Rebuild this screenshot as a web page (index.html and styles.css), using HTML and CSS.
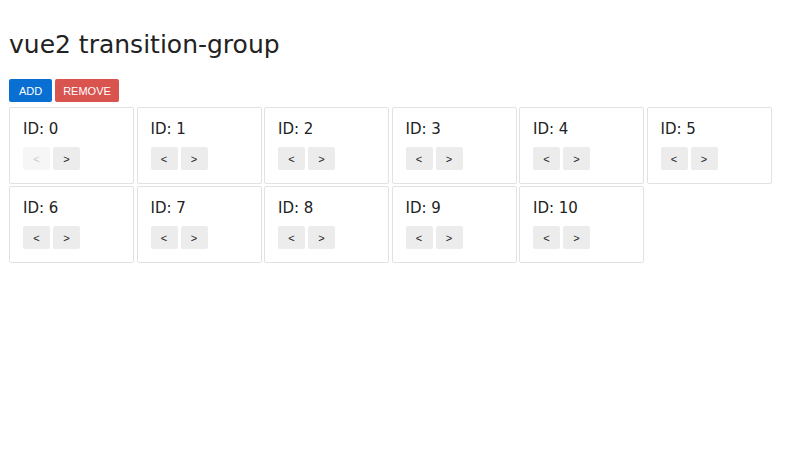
FILE: index.html
```html
<!DOCTYPE html>
<html>
<head>
<meta charset="utf-8">
<link rel="stylesheet" href="styles.css">
</head>
<body>
<h1 class="title">vue2 transition-group</h1>
<div class="toolbar">
  <button class="btn btn-add">ADD</button>
  <button class="btn btn-remove">REMOVE</button>
</div>
<div class="list">
  <div class="card"><div class="card-id">ID: 0</div><div class="moves"><button class="mv" disabled>&lt;</button><button class="mv">&gt;</button></div></div>
  <div class="card"><div class="card-id">ID: 1</div><div class="moves"><button class="mv">&lt;</button><button class="mv">&gt;</button></div></div>
  <div class="card"><div class="card-id">ID: 2</div><div class="moves"><button class="mv">&lt;</button><button class="mv">&gt;</button></div></div>
  <div class="card"><div class="card-id">ID: 3</div><div class="moves"><button class="mv">&lt;</button><button class="mv">&gt;</button></div></div>
  <div class="card"><div class="card-id">ID: 4</div><div class="moves"><button class="mv">&lt;</button><button class="mv">&gt;</button></div></div>
  <div class="card"><div class="card-id">ID: 5</div><div class="moves"><button class="mv">&lt;</button><button class="mv">&gt;</button></div></div>
  <div class="card"><div class="card-id">ID: 6</div><div class="moves"><button class="mv">&lt;</button><button class="mv">&gt;</button></div></div>
  <div class="card"><div class="card-id">ID: 7</div><div class="moves"><button class="mv">&lt;</button><button class="mv">&gt;</button></div></div>
  <div class="card"><div class="card-id">ID: 8</div><div class="moves"><button class="mv">&lt;</button><button class="mv">&gt;</button></div></div>
  <div class="card"><div class="card-id">ID: 9</div><div class="moves"><button class="mv">&lt;</button><button class="mv">&gt;</button></div></div>
  <div class="card"><div class="card-id">ID: 10</div><div class="moves"><button class="mv">&lt;</button><button class="mv">&gt;</button></div></div>
</div>
</body>
</html>
```
FILE: styles.css
```css
html, body {
  background: #ffffff;
}
body {
  margin: 0;
  padding: 0 9px;
  font-family: "DejaVu Sans", sans-serif;
  color: #222222;
}
.title {
  margin: 0;
  padding-top: 30px;
  font-size: 25px;
  font-weight: normal;
  line-height: 30px;
  color: #222222;
}
.toolbar {
  display: flex;
  gap: 3px;
  margin-top: 19px;
  margin-bottom: 5px;
}
.btn {
  height: 23px;
  padding: 0;
  border: none;
  border-radius: 2px;
  font-family: "Liberation Sans", Arial, sans-serif;
  font-size: 11px;
  color: #ffffff;
}
.btn-add {
  background: #0a6fd3;
  width: 43px;
}
.btn-remove {
  background: #d9534f;
  width: 64px;
}
.list {
  display: grid;
  grid-template-columns: repeat(6, 125px);
  column-gap: 2.5px;
  row-gap: 2px;
}
.card {
  box-sizing: border-box;
  height: 77px;
  border: 1px solid #e2e2e2;
  border-radius: 2px;
  padding: 12px 13px 0 13px;
}
.card-id {
  font-size: 15px;
  line-height: 18px;
}
.moves {
  display: flex;
  gap: 3px;
  margin-top: 9px;
}
.mv {
  width: 27px;
  height: 23px;
  padding: 0;
  border: none;
  border-radius: 2px;
  background: #ececec;
  color: #222222;
  font-family: "Liberation Sans", Arial, sans-serif;
  font-size: 11px;
}
.mv:disabled {
  background: #f6f6f6;
  color: #cccccc;
}
```
